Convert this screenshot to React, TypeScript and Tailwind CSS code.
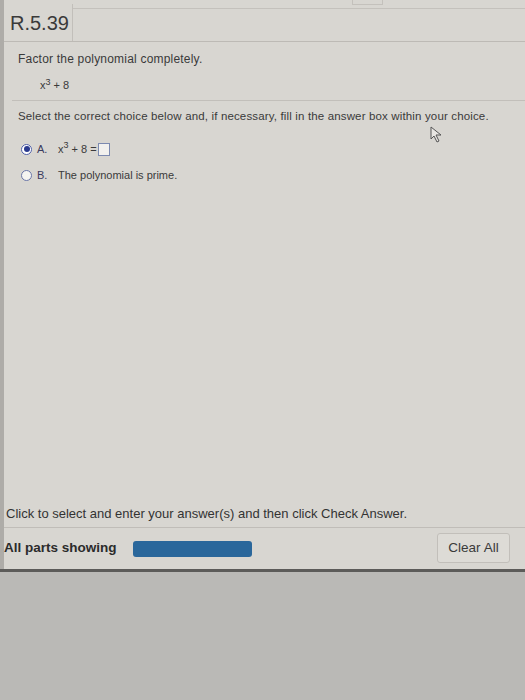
export default function App() {
  return (
    <div
      className="flex h-[700px] w-[525px] flex-col overflow-hidden bg-[#bab9b6] text-[#333]"
      style={{ fontFamily: '"Liberation Sans", Arial, sans-serif' }}
    >
      <div className="flex h-[569px] flex-col border-l-4 border-[#aeaca8] bg-[#d8d6d1]">
        {/* top header */}
        <div className="relative flex h-[42px] border-b border-[#bdbab5]">
          <div className="mt-[4px] flex w-[69px] items-center border-r border-[#c2bfba] pl-[6px] text-[20px] text-[#3a3a3a]">
            R.5.39
          </div>
          <div className="mt-[8px] flex-1 border-t border-[#c4c1bc]" />
          <div className="absolute left-[348px] top-0 h-[5px] w-[31px] border-x border-b border-[#c4c1bc]" />
        </div>

        {/* question */}
        <div className="pl-[14px] pt-[8px]">
          <div className="text-[12px] tracking-[0.2px] text-[#3a3a3a]">Factor the polynomial completely.</div>
          <div className="mt-[9px] pl-[22px] text-[11px] text-[#3a3a3a]">
            x<sup className="text-[9px]">3</sup> + 8
          </div>
        </div>
        <div className="ml-[8px] mt-[6px] border-t border-[#c2bfba]" />

        <div className="relative pl-[14px] pt-[7px]">
          <div className="text-[11.5px] tracking-[0.15px] text-[#3a3a3a]">
            Select the correct choice below and, if necessary, fill in the answer box within your choice.
          </div>
          <svg className="absolute left-[426px] top-[25px]" width="14" height="17" viewBox="0 0 14 17">
            <path d="M1 1 L1 13 L4 10 L7 16 L9 15 L6 9 L11 9 Z" fill="#e8e6e2" stroke="#555" strokeWidth="1" />
          </svg>

          <div className="mt-[16px] flex flex-col gap-[10px] pl-[3px]">
            <div className="flex items-center gap-[5px] text-[11px] text-[#3a3a3a]">
              <span className="flex h-[11px] w-[11px] items-center justify-center rounded-full border border-[#5060a8] bg-white">
                <span className="h-[6px] w-[6px] rounded-full bg-[#2a3a8e]" />
              </span>
              <span className="w-[14px] text-[#3a3a5e]">A.</span>
              <span className="ml-[2px] flex items-center">
                x<sup className="text-[9px]">3</sup>
                <span className="ml-[3px]">+ 8 =</span>
                <span className="ml-[1px] inline-block h-[13px] w-[12px] border border-[#7c8ab0] bg-[#f2f1ee]" />
              </span>
            </div>
            <div className="flex items-center gap-[5px] text-[11px] text-[#3a3a3a]">
              <span className="h-[11px] w-[11px] rounded-full border border-[#6a76a8] bg-[#f5f4f1]" />
              <span className="w-[14px] text-[#3a3a5e]">B.</span>
              <span className="ml-[2px]">The polynomial is prime.</span>
            </div>
          </div>
        </div>

        <div className="flex-1" />

        {/* footer */}
        <div className="pb-[4px] pl-[2px] text-[13px] text-[#333]">
          Click to select and enter your answer(s) and then click Check Answer.
        </div>
        <div className="border-t border-[#c0bdb8]" />
        <div className="flex items-center pb-[6px] pt-[5px]">
          <div className="w-[129px] text-[13.5px] font-bold text-[#2b2b2b]">All parts showing</div>
          <div className="mt-[2px] h-[16px] w-[119px] rounded-[3px] bg-[#2a679b]" />
          <div className="flex-1" />
          <button className="mr-[15px] h-[30px] w-[73px] rounded-[3px] border border-[#c2bfba] bg-[#dddbd6] text-[13.5px] text-[#3a3a3a]">
            Clear All
          </button>
        </div>
      </div>
      <div className="h-[3px] bg-[#5c5b59]" />
    </div>
  );
}
